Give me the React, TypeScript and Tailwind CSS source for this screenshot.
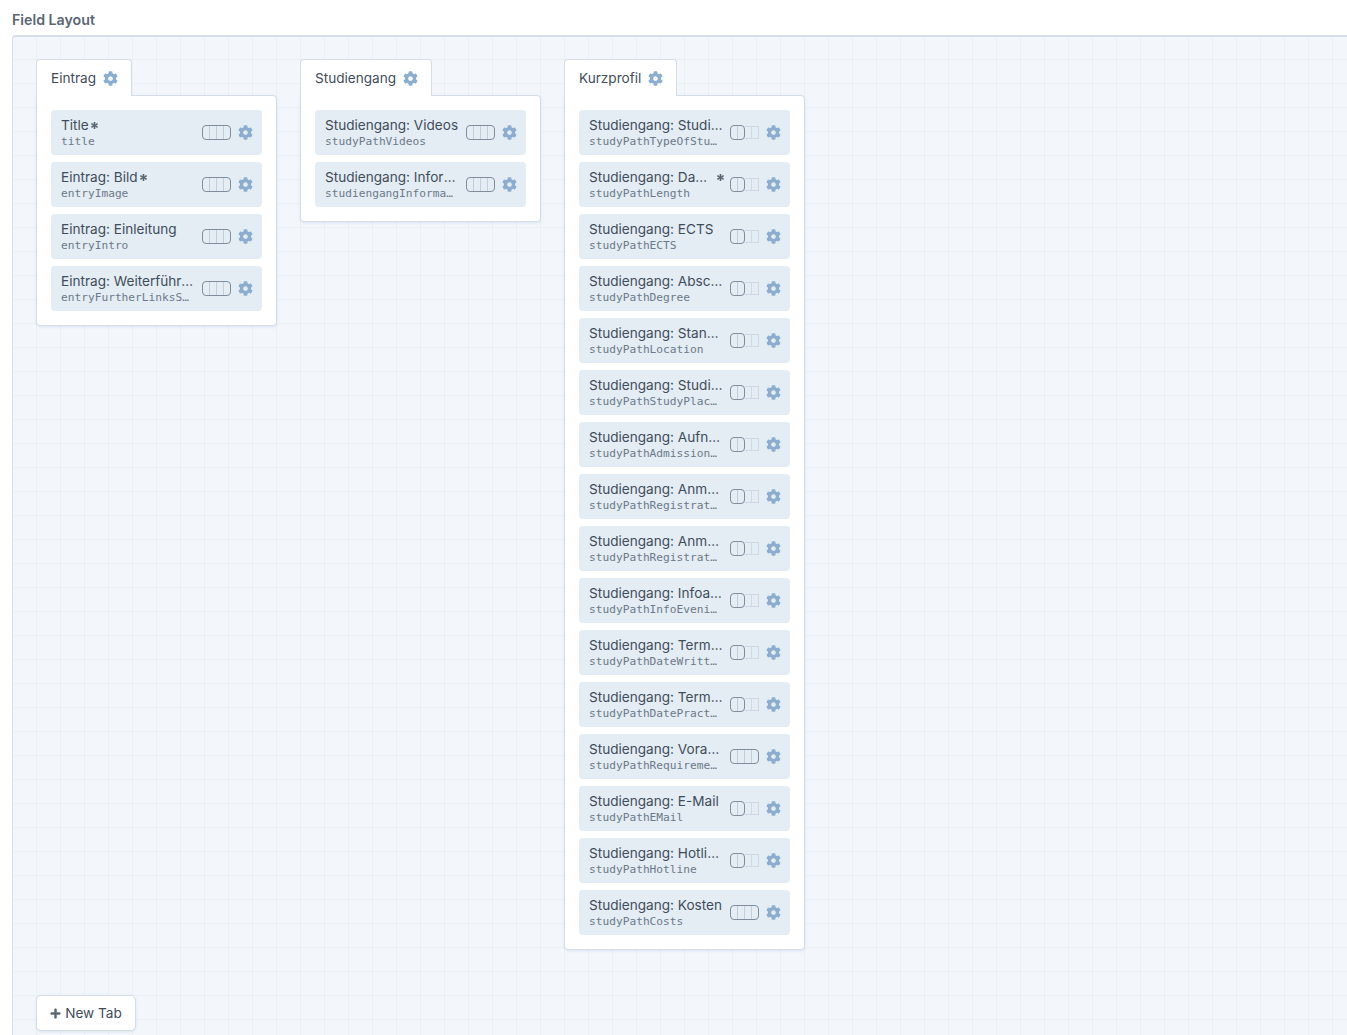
import { FaAsterisk, FaCog, FaPlus } from "react-icons/fa";

type Field = {
  label: string;
  handle: string;
  required?: boolean;
  half?: boolean;
};

const tabs: { name: string; fields: Field[] }[] = [
  {
    name: "Eintrag",
    fields: [
      { label: "Title", handle: "title", required: true },
      { label: "Eintrag: Bild", handle: "entryImage", required: true },
      { label: "Eintrag: Einleitung", handle: "entryIntro" },
      { label: "Eintrag: Weiterführende Links", handle: "entryFurtherLinksSection" },
    ],
  },
  {
    name: "Studiengang",
    fields: [
      { label: "Studiengang: Videos", handle: "studyPathVideos" },
      { label: "Studiengang: Informationen", handle: "studiengangInformationen" },
    ],
  },
  {
    name: "Kurzprofil",
    fields: [
      { label: "Studiengang: Studienart", handle: "studyPathTypeOfStudies", half: true },
      { label: "Studiengang: Dauer des Studiums", handle: "studyPathLength", required: true, half: true },
      { label: "Studiengang: ECTS", handle: "studyPathECTS", half: true },
      { label: "Studiengang: Abschluss", handle: "studyPathDegree", half: true },
      { label: "Studiengang: Standort", handle: "studyPathLocation", half: true },
      { label: "Studiengang: Studienplätze", handle: "studyPathStudyPlaces", half: true },
      { label: "Studiengang: Aufnahme", handle: "studyPathAdmissionDate", half: true },
      { label: "Studiengang: Anmeldung", handle: "studyPathRegistrationStart", half: true },
      { label: "Studiengang: Anmeldeschluss", handle: "studyPathRegistrationEnd", half: true },
      { label: "Studiengang: Infoabend", handle: "studyPathInfoEvening", half: true },
      { label: "Studiengang: Termin schriftlich", handle: "studyPathDateWritten", half: true },
      { label: "Studiengang: Termin praktisch", handle: "studyPathDatePractical", half: true },
      { label: "Studiengang: Voraussetzungen", handle: "studyPathRequirements" },
      { label: "Studiengang: E-Mail", handle: "studyPathEMail", half: true },
      { label: "Studiengang: Hotline Kontakt", handle: "studyPathHotline", half: true },
      { label: "Studiengang: Kosten", handle: "studyPathCosts" },
    ],
  },
];

function WidthSlider({ half }: { half?: boolean }) {
  if (half) {
    return (
      <div className="flex h-[15px] w-[29px] shrink-0 items-center">
        <div className="flex h-[15px] w-[15px] shrink-0 rounded-[4px] border border-[#7f8d9c]">
          <div className="w-1/2 border-r border-[#c3ced9]" />
        </div>
        <div className="flex h-[13px] w-[14px] shrink-0 border-y border-r border-[#d0d9e3]">
          <div className="w-1/2 border-r border-[#d0d9e3]" />
        </div>
      </div>
    );
  }
  return (
    <div className="flex h-[15px] w-[29px] shrink-0 rounded-[4px] border border-[#7f8d9c]">
      <div className="flex-1 border-r border-[#c3ced9]" />
      <div className="flex-1 border-r border-[#c3ced9]" />
      <div className="flex-1 border-r border-[#c3ced9]" />
      <div className="flex-1" />
    </div>
  );
}

function FieldRow({ field }: { field: Field }) {
  return (
    <div className="flex h-[45px] items-center rounded-[4px] bg-[#e4ecf4] pr-[9px] pl-[10px]">
      <div className="min-w-0 flex-1 pt-[2px] pr-[6px]">
        <div className="flex h-4 items-center">
          <span className="truncate text-[13.6px] leading-4 text-[#3f4d5a]">{field.label}</span>
          {field.required && (
            <FaAsterisk className="ml-[2px] shrink-0 stroke-current stroke-[30] text-[7px] text-[#596673]" />
          )}
        </div>
        <div className="mt-px truncate pr-[6px] font-['DejaVu_Sans_Mono',monospace] text-[11.2px] leading-4 text-[#6b7a88]">
          {field.handle}
        </div>
      </div>
      <WidthSlider half={field.half} />
      <FaCog className="ml-[7px] shrink-0 text-[15px] text-[#8aadd0]" />
    </div>
  );
}

function TabColumn({ name, fields }: { name: string; fields: Field[] }) {
  return (
    <div className="w-[241px] shrink-0">
      <div className="relative z-10 -mb-px inline-flex h-[37px] items-center gap-[7px] rounded-t-[4px] border border-b-0 border-[#d5dde7] bg-white pr-[13px] pl-[14px] text-[13.6px] text-[#3f4d5a]">
        {name}
        <FaCog className="text-[15px] text-[#8aadd0]" />
      </div>
      <div className="flex flex-col gap-[7px] rounded-[4px] rounded-tl-none border border-[#d5dde7] bg-white p-[14px] shadow-[0_1px_3px_rgba(96,125,159,0.15)]">
        {fields.map((field) => (
          <FieldRow key={field.handle} field={field} />
        ))}
      </div>
    </div>
  );
}

export default function App() {
  return (
    <div className="flex h-[1035px] flex-col overflow-hidden bg-white font-['Inter',sans-serif]">
      <div className="h-[35px] shrink-0 pt-[11px] pl-[12px] text-[14.2px] leading-[18px] font-semibold text-[#596673]">
        Field Layout
      </div>
      <div className="-mr-4 ml-[12px] flex flex-1 flex-col justify-between rounded-tl-[4px] border-t-2 border-l border-[#d5deea] bg-[#f3f7fc] bg-[linear-gradient(to_right,#ebf0f7_1px,transparent_1px),linear-gradient(to_bottom,#ebf0f7_1px,transparent_1px)] bg-[size:24px_24px] bg-[position:-1px_-2px] pt-[22px] pb-[4px] pl-[23px]">
        <div className="flex gap-[23px]">
          {tabs.map((tab) => (
            <TabColumn key={tab.name} name={tab.name} fields={tab.fields} />
          ))}
        </div>
        <button className="flex h-[36px] w-[100px] items-center justify-center gap-[4px] rounded-[5px] border border-[#d5dde7] bg-white text-[13.6px] text-[#3f4d5a] shadow-[0_1px_3px_rgba(96,125,159,0.15)]">
          <FaPlus className="stroke-current stroke-[20] text-[11px] text-[#596673]" />
          New Tab
        </button>
      </div>
    </div>
  );
}
